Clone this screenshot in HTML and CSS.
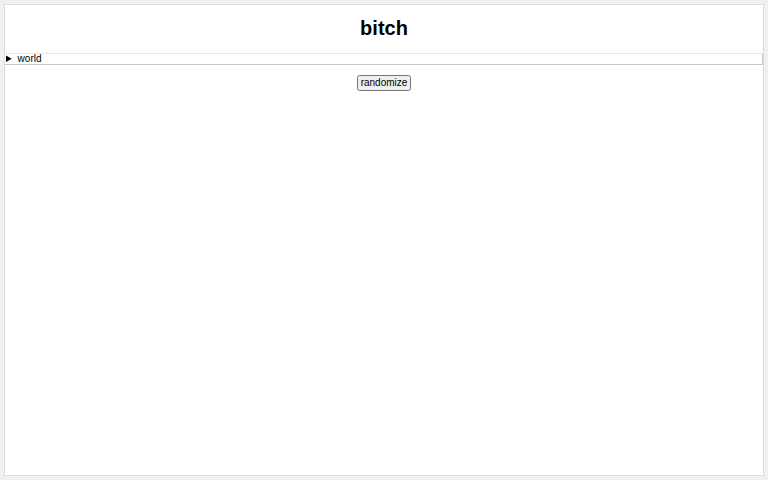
FILE: index.html
```html
<!DOCTYPE html>
<html lang="en">
<head>
    <meta charset="UTF-8">
    <title>bitch</title>
    <link rel="stylesheet" href="styles.css">
</head>
<body>
    <div class="page">
        <div class="header">bitch</div>
        <details class="world">
            <summary><span class="label">world</span></summary>
        </details>
        <div class="controls">
            <button id="randomize">randomize</button>
        </div>
    </div>
</body>
</html>
```

FILE: styles.css
```css
html, body {
    height: 100%;
}
body {
    margin: 0;
    padding: 4px;
    box-sizing: border-box;
    background: #f0f0f0;
    font-family: 'Liberation Sans', Arial, sans-serif;
}
.page {
    height: 100%;
    box-sizing: border-box;
    background: #fff;
    border: 1px solid #dcdcdc;
}
.header {
    text-align: center;
    font-size: 20px;
    font-weight: bold;
    padding: 12px 0 13px;
    border-bottom: 1px solid #e6e6e6;
}
.world {
    font-size: 10px;
    border-bottom: 1px solid #c8c8c8;
    border-right: 1px solid #c8c8c8;
}
.world summary {
    padding: 0 0 0 1px;
    line-height: 10px;
    cursor: pointer;
}
.world .label {
    margin-left: 1px;
}
.controls {
    text-align: center;
    padding-top: 7px;
}
#randomize {
    font-family: 'Liberation Sans', Arial, sans-serif;
    font-size: 10px;
    line-height: 10px;
    padding: 1px 2px;
}
```
